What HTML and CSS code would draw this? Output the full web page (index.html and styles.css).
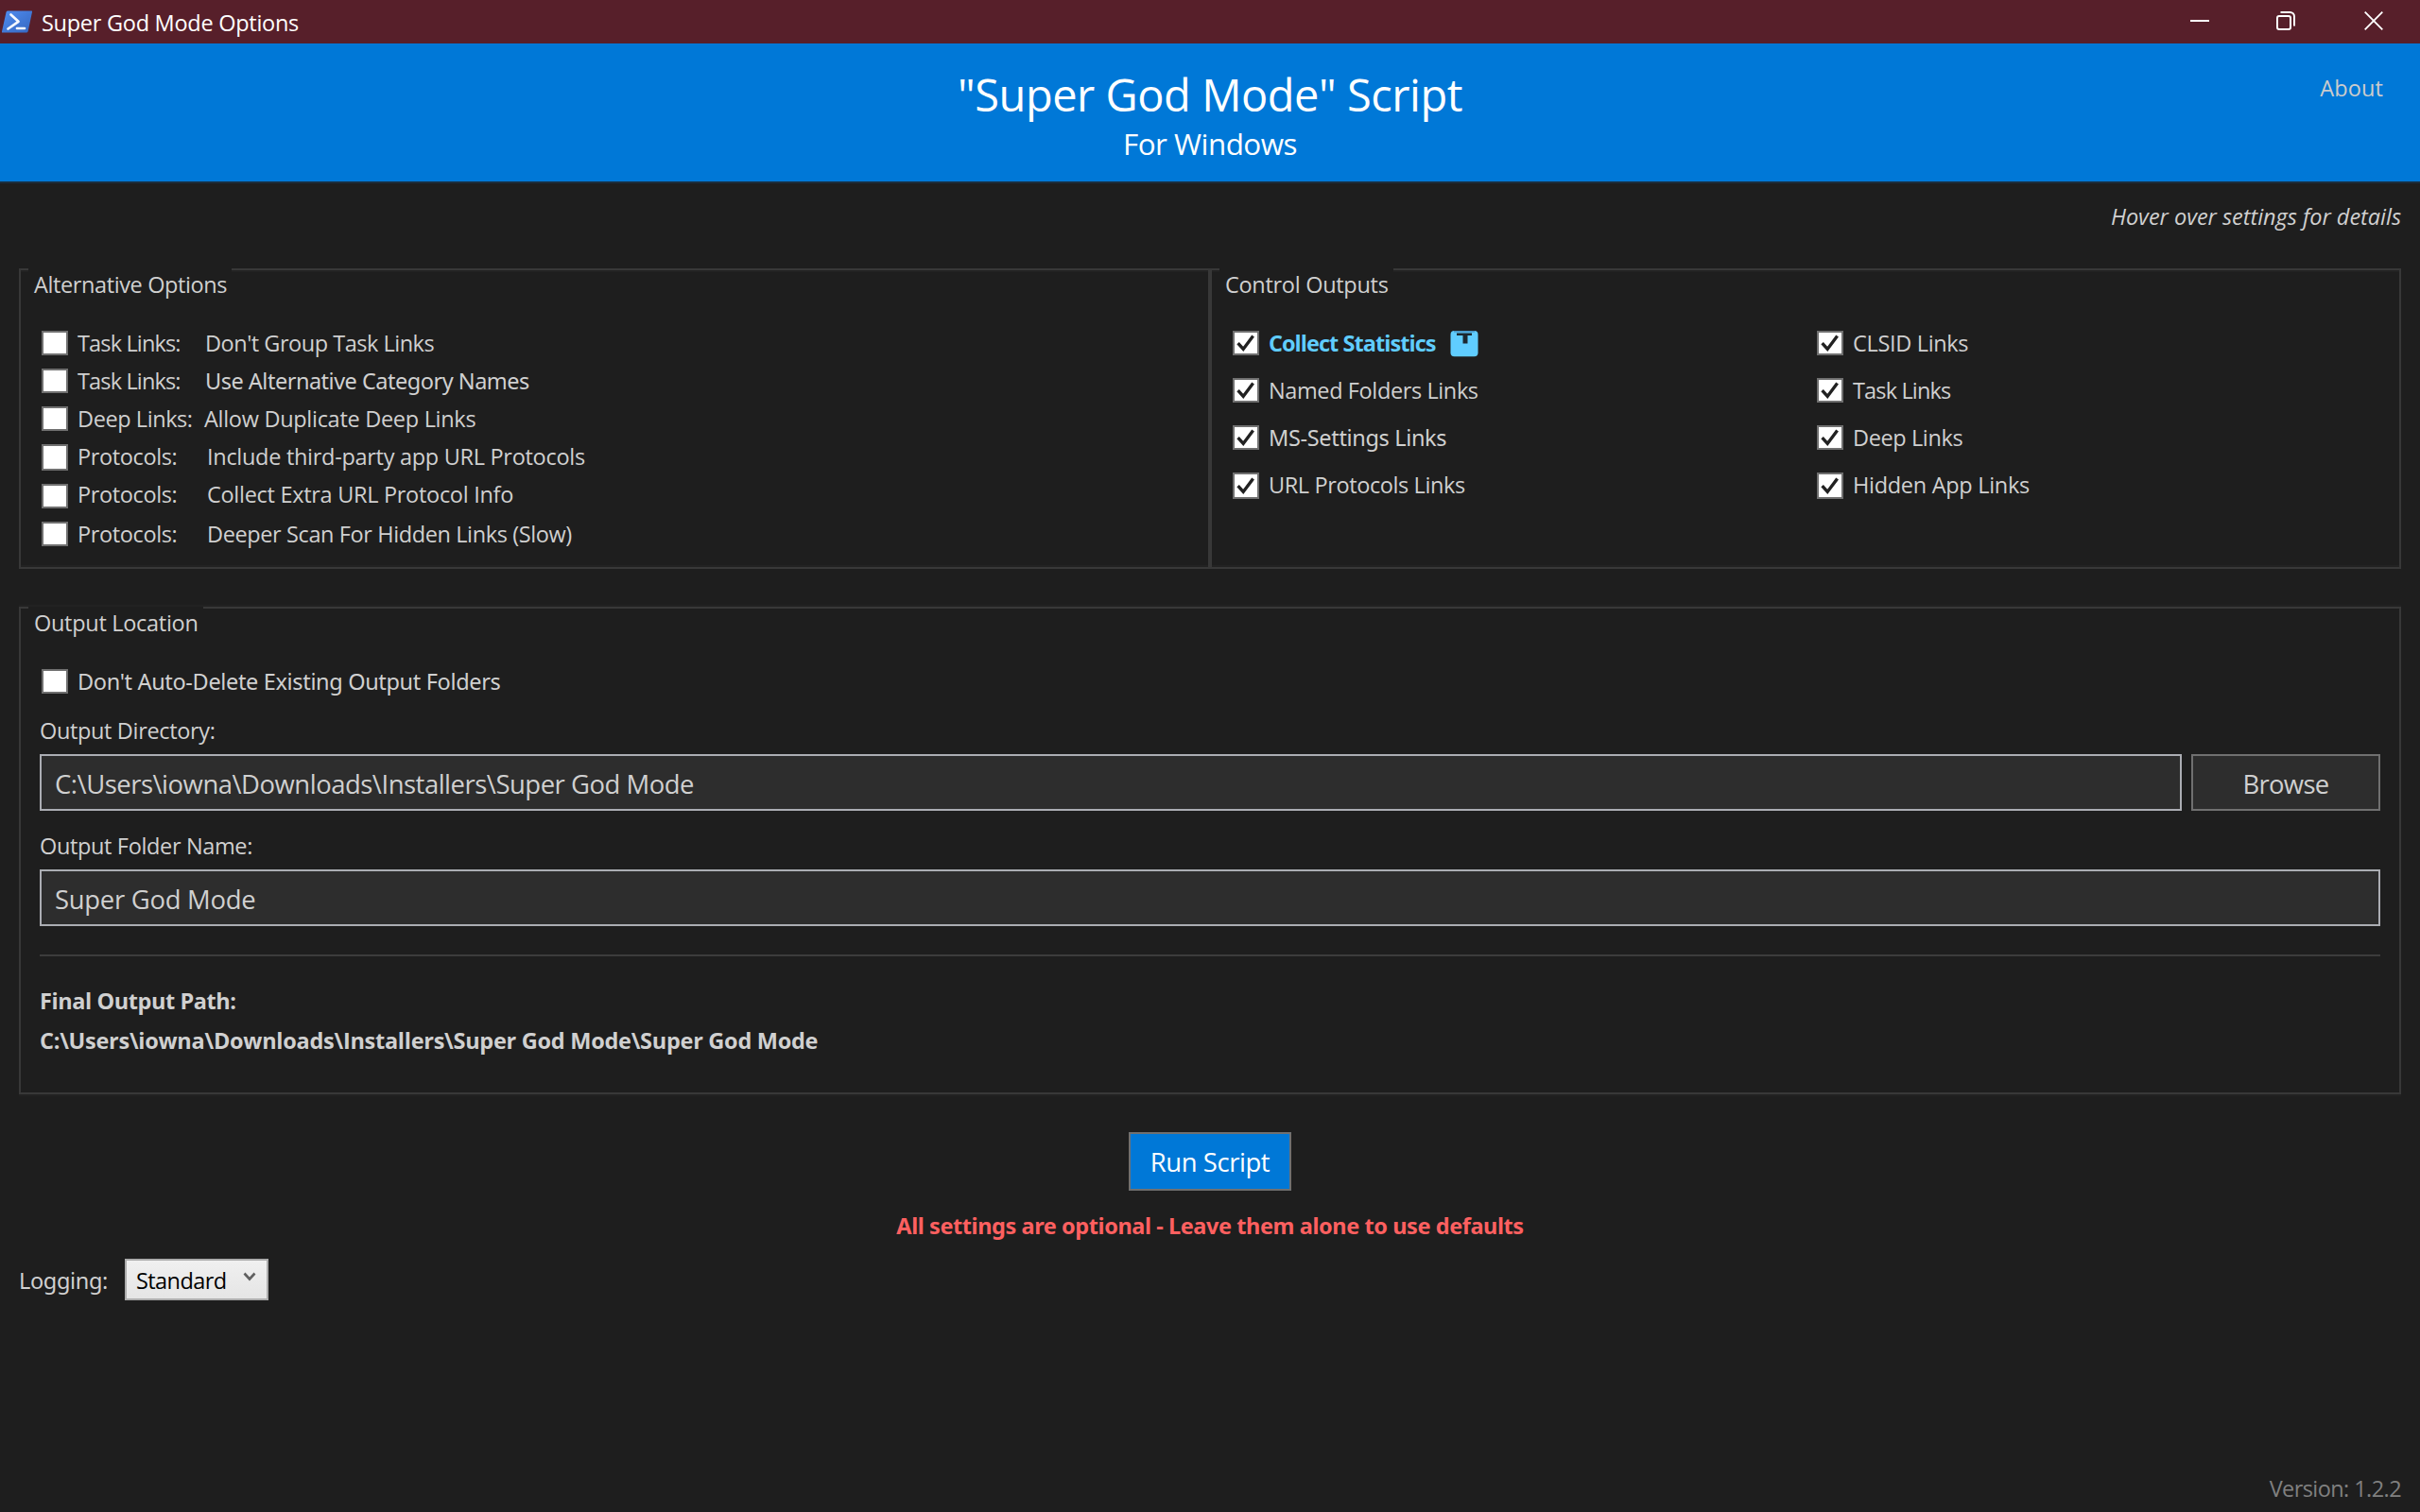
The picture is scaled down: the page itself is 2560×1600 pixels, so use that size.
FILE: index.html
```html
<!DOCTYPE html>
<html lang="en">
<head>
<meta charset="utf-8">
<title>Super God Mode Options</title>
<link rel="stylesheet" href="styles.css">
</head>
<body>
<svg class="defs" width="0" height="0">
  <symbol id="check" viewBox="0 0 24 22"><path d="M3.6 11.2l5.6 6.2L19.6 3.6" fill="none" stroke="#212121" stroke-width="3.4"/></symbol>
</svg>
<div class="window">
  <div class="titlebar">
    <svg class="app-icon" viewBox="0 0 32 24">
      <defs><linearGradient id="ps" x1="0" y1="0" x2="1" y2="1"><stop offset="0" stop-color="#4f8df0"/><stop offset="1" stop-color="#3566c0"/></linearGradient></defs>
      <path d="M6 .5h25a1 1 0 0 1 1 1.300L27.700 22a2 2 0 0 1-2 1.500H1a1 1 0 0 1-1-1.300L4.500 2A2 2 0 0 1 6 .5z" fill="url(#ps)"/>
      <path d="M9.500 4.500l8 7.300L6.500 19.500M16 19h8" fill="none" stroke="#f4f8ff" stroke-width="2.700" stroke-linecap="round" stroke-linejoin="round"/>
    </svg>
    <span class="window-title">Super God Mode Options</span>
    <div class="window-buttons">
      <svg viewBox="0 0 20 20"><path d="M0 10h20" stroke="#fff" stroke-width="2"/></svg>
      <svg viewBox="0 0 20 20" fill="none" stroke="#fff" stroke-width="2"><rect x="1" y="5" width="14" height="14" rx="2"/><path d="M4.500 1H14.500a4.500 4.500 0 0 1 4.500 4.500V15.500"/></svg>
      <svg viewBox="0 0 20 20"><path d="M.7.7l18.600 18.600M19.300.7L.7 19.300" stroke="#fff" stroke-width="1.800"/></svg>
    </div>
  </div>

  <header class="header">
    <div class="header-center">
      <h1>"Super God Mode" Script</h1>
      <p class="subtitle">For Windows</p>
    </div>
    <a class="about">About</a>
  </header>

  <p class="hint">Hover over settings for details</p>

  <div class="groups">
    <section class="group group-options">
      <h2 class="legend legend-alt">Alternative Options</h2>
      <div class="options">
        <label class="row"><i class="box"></i><span class="kind task">Task Links:</span><span class="nogroup">Don't Group Task Links</span></label>
        <label class="row"><i class="box"></i><span class="kind task">Task Links:</span><span class="noto altnames">Use Alternative Category Names</span></label>
        <label class="row"><i class="box"></i><span class="kind deep">Deep Links:</span><span>Allow Duplicate Deep Links</span></label>
        <label class="row"><i class="box tall"></i><span class="kind proto">Protocols:</span><span>Include third-party app URL Protocols</span></label>
        <label class="row"><i class="box low"></i><span class="kind proto">Protocols:</span><span>Collect Extra URL Protocol Info</span></label>
        <label class="row last"><i class="box"></i><span class="kind proto">Protocols:</span><span class="named">Deeper Scan For Hidden Links (Slow)</span></label>
      </div>
    </section>
    <section class="group group-outputs">
      <h2 class="legend">Control Outputs</h2>
      <div class="outputs">
        <label class="row"><i class="box"><svg><use href="#check"/></svg></i><span class="stats">Collect Statistics</span>
          <svg class="stats-icon" viewBox="0 0 30 28"><rect x=".5" y="0" width="29" height="27.300" rx="4" fill="#60cdff"/><path d="M4 .8h22" stroke="#4593c4" stroke-width="1.600"/><path d="M7 2.500h16v2.500h-4.500v8.500h-5V5H7z" fill="#1c2830"/></svg></label>
        <label class="row"><i class="box"><svg><use href="#check"/></svg></i><span class="clsid">CLSID Links</span></label>
        <label class="row"><i class="box"><svg><use href="#check"/></svg></i><span class="named">Named Folders Links</span></label>
        <label class="row"><i class="box"><svg><use href="#check"/></svg></i><span class="task">Task Links</span></label>
        <label class="row"><i class="box"><svg><use href="#check"/></svg></i><span class="noto">MS-Settings Links</span></label>
        <label class="row"><i class="box"><svg><use href="#check"/></svg></i><span class="named">Deep Links</span></label>
        <label class="row"><i class="box tall"><svg><use href="#check"/></svg></i><span class="named">URL Protocols Links</span></label>
        <label class="row"><i class="box tall"><svg><use href="#check"/></svg></i><span>Hidden App Links</span></label>
      </div>
    </section>
  </div>

  <section class="group group-location">
    <h2 class="legend">Output Location</h2>
    <div class="location">
      <label class="row keep"><i class="box"></i><span class="noto">Don't Auto-Delete Existing Output Folders</span></label>
      <p class="field-label first">Output Directory:</p>
      <div class="field-line">
        <div class="field path">C:\Users\iowna\Downloads\Installers\Super God Mode</div>
        <div class="button browse">Browse</div>
      </div>
      <p class="field-label">Output Folder Name:</p>
      <div class="field">Super God Mode</div>
      <div class="separator"></div>
      <p class="final">Final Output Path:</p>
      <p class="final final-path">C:\Users\iowna\Downloads\Installers\Super God Mode\Super God Mode</p>
    </div>
  </section>

  <div class="button run">Run Script</div>
  <p class="notice noto">All settings are optional - Leave them alone to use defaults</p>

  <div class="logging">
    <span class="noto">Logging:</span>
    <div class="combo"><span>Standard</span><svg viewBox="0 0 14 10"><path d="M1.500 1.500L7 7.500l5.500-6" fill="none" stroke="#606060" stroke-width="2.600"/></svg></div>
  </div>

  <p class="version">Version: 1.2.2</p>
</div>
</body>
</html>
```
FILE: styles.css
```css
* { box-sizing: border-box; margin: 0; padding: 0; }

body {
  background: #1e1e1e;
  color: #d0d0d0;
  font-family: "Open Sans", "Noto Sans", sans-serif;
  font-size: 23.5px;
  line-height: 32px;
  letter-spacing: -0.0125em;
  white-space: nowrap;
}

.defs { position: absolute; }
.noto { font-family: "Noto Sans", sans-serif; letter-spacing: -0.0145em; }

.window { display: flex; flex-direction: column; width: 2560px; height: 1600px; overflow: hidden; }

/* Title bar */
.titlebar { display: flex; height: 46px; flex: none; background: #571f2a; color: #fff; }
.app-icon { width: 32px; height: 24px; margin: 11px 10px 0 2px; }
.window-title { margin-top: 8px; letter-spacing: -0.0115em; }
.window-buttons { display: flex; gap: 72px; margin: 12px 39px 0 auto; }
.window-buttons svg { width: 20px; height: 20px; }
.window-buttons svg:nth-child(2) { margin-right: 1px; margin-left: -1px; }

/* Header */
.header {
  display: grid; grid-template-columns: 1fr auto 1fr; flex: none;
  height: 148px; padding: 22px 38px 0;
  background: #0078d7; border-bottom: 2px solid #1b2e3f; color: #fff;
}
.header-center { grid-column: 2; text-align: center; }
h1 { font-size: 47px; font-weight: 400; line-height: 64px; letter-spacing: -0.010em; }
.subtitle { margin-top: -2px; font-size: 31.4px; line-height: 43px; letter-spacing: -0.016em; }
.about { margin-top: 9px; margin-right: 1px; justify-self: end; color: #ccc; letter-spacing: 0.005em; }

.hint { margin: 19px 20px 39px; text-align: right; font-style: italic; letter-spacing: -0.001em; }

/* Group boxes */
.groups { display: grid; grid-template-columns: 1fr 1fr; margin: 0 20px; height: 318px; flex: none; }
.group { border: 2px solid #383838; box-shadow: inset 0 2px #222, inset 0 -2px #222; }
.legend {
  width: fit-content; height: 33px; margin: -2px 0 30px 8px; padding: 1px 5px 0 6px;
  background: #1e1e1e; font-size: 23.5px; font-weight: 400;
}
.legend-alt { letter-spacing: -0.0165em; }

.row { display: flex; height: 32px; }
.box {
  display: block; flex: none; width: 28px; height: 26px; margin: 3px 10px 0 0;
  background: #fff; border: 2px solid #707070;
}
.box.tall { height: 28px; }
.box.low { margin-top: 5px; }
.box svg { display: block; width: 24px; height: 100%; }

.options { display: flex; flex-direction: column; gap: 8px; padding-left: 22px; }
.options .last { margin-top: 2px; }
.kind { width: 135px; }
.kind.proto { width: 137px; letter-spacing: -0.016em; }
.kind.deep { width: 134px; letter-spacing: -0.018em; }
.task { letter-spacing: -0.036em; }
.nogroup { letter-spacing: -0.0205em; }
.altnames { letter-spacing: -0.021em; }

.outputs { display: grid; grid-template-columns: 618px 1fr; row-gap: 18px; padding-left: 22px; }
.stats { width: 176px; color: #60cdff; font-weight: 700; letter-spacing: -0.0405em; }
.stats-icon { width: 30px; height: 28px; margin: 3px 0 0 16px; }
.named { letter-spacing: -0.0165em; }
.clsid { letter-spacing: -0.014em; }

/* Output location */
.group-location { flex: none; height: 516px; margin: 40px 20px 0; box-shadow: 0 -2px #222, 0 2px #222; }
.location { padding: 0 20px; }
.keep { padding-left: 2px; }
.field-label { margin: 21px 0 9px; letter-spacing: -0.015em; }
.field-label.first { margin-top: 20px; }
.field-line { display: flex; gap: 10px; }
.field {
  flex: 1; height: 60px; padding: 11px 14px;
  background: #2d2d2d; border: 2px solid #abadb3;
  font-size: 27.44px; line-height: 37px; letter-spacing: -0.010em;
}
.path { letter-spacing: -0.0173em; }
.button { border: 2px solid #707070; padding-top: 11px; font-size: 27.44px; line-height: 37px; text-align: center; }
.browse { width: 200px; height: 60px; background: #2d2d2d; letter-spacing: -0.0254em; }
.separator { height: 2px; margin: 30px 0 31px; background: #3c3c3c; }
.final { font-weight: 700; letter-spacing: -0.018em; }
.final-path { margin-top: 10px; letter-spacing: -0.0115em; }

/* Footer */
.run {
  align-self: center; flex: none; width: 172px; height: 62px; margin-top: 40px;
  background: #0078d7; color: #fff; letter-spacing: -0.0155em;
}
.notice { margin-top: 21px; text-align: center; color: #ff6060; font-weight: 700; letter-spacing: -0.0178em; }
.logging { display: flex; margin: 19px 0 0 20px; }
.logging > span { width: 112px; margin-top: 7px; }
.combo {
  display: flex; width: 152px; height: 44px; padding: 5px 11px 5px 10px;
  background: linear-gradient(#f0f0f0, #e5e5e5); border: 2px solid #acacac;
  color: #000; letter-spacing: -0.025em;
}
.combo svg { width: 14px; height: 10px; margin: 7px 0 0 auto; }
.version { margin: auto 20px 9px; text-align: right; color: #808080; letter-spacing: -0.0245em; }
```
